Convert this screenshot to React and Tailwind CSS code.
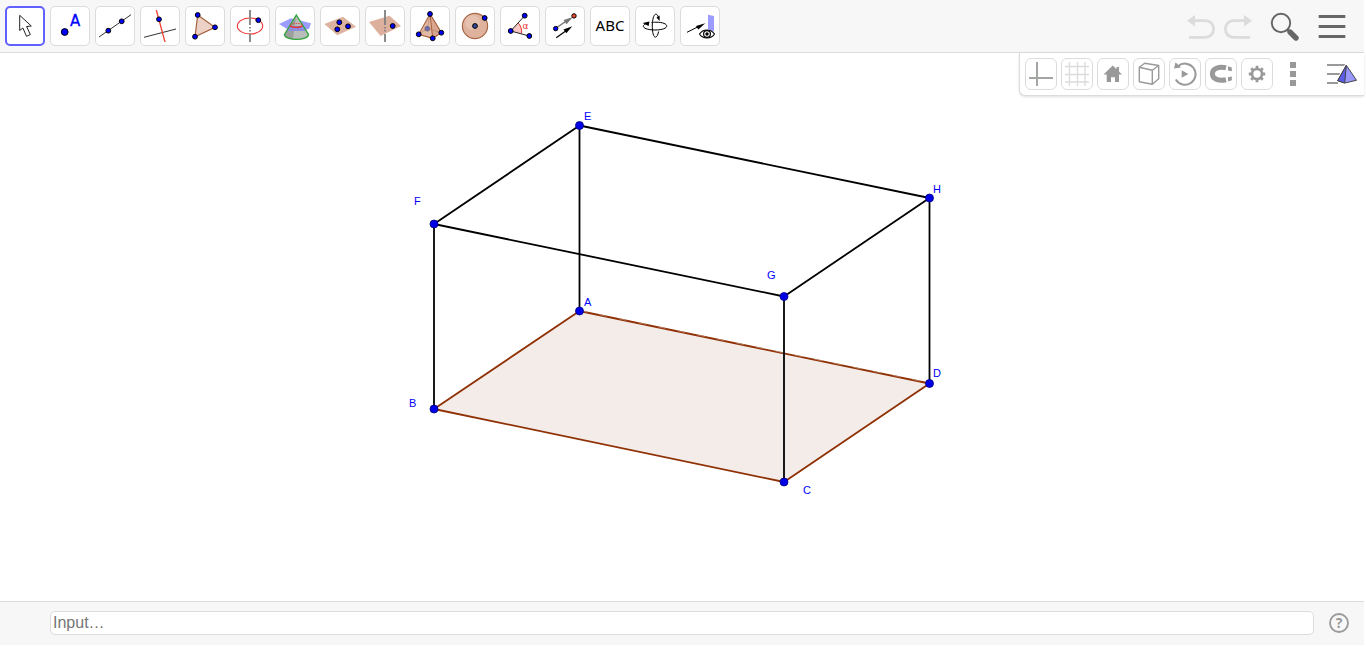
import React from 'react';
import { useState } from 'react';

// small construction point used inside the tool icons
function Dot({ x, y, r = 2.4, fill = '#0000ff' }) {
  return <circle cx={x} cy={y} r={r} fill={fill} stroke="#000" strokeWidth="1" />;
}

const tools = [
  {
    name: 'Move',
    icon: (
      <path d="M10.7 5.3V20.5L13.9 18L17.5 26.3L21.3 24.5L17.6 16.5L22.3 16Z" fill="#fff" stroke="#222" strokeWidth="1" />
    ),
  },
  {
    name: 'Point',
    icon: (
      <>
        <Dot x={10.7} y={22} r={3.4} />
        <text x="16" y="16" fontSize="15" fill="#0000ff" stroke="#0000ff" strokeWidth="0.3" className="font-['DejaVu_Sans',sans-serif]">A</text>
      </>
    ),
  },
  {
    name: 'Line',
    icon: (
      <>
        <path d="M0 27L32 4.7" stroke="#333" strokeWidth="1" />
        <Dot x={9.3} y={20.7} />
        <Dot x={22.7} y={11.3} />
      </>
    ),
  },
  {
    name: 'Perpendicular Line',
    icon: (
      <>
        <path d="M0 27.3L32 19" stroke="#333" strokeWidth="1" />
        <path d="M12.3 0L21 32" stroke="#f04030" strokeWidth="1.3" />
        <Dot x={15} y={9.3} />
      </>
    ),
  },
  {
    name: 'Polygon',
    icon: (
      <>
        <path d="M8.7 5L26 17.3L6 26.7Z" fill="#ecd2c6" stroke="#a5603c" strokeWidth="1.2" />
        <Dot x={8.7} y={5} />
        <Dot x={26} y={17.3} />
        <Dot x={6} y={26.7} />
      </>
    ),
  },
  {
    name: 'Circle with Axis through Point',
    icon: (
      <>
        <ellipse cx="16" cy="16" rx="12.7" ry="8" fill="none" stroke="#f03030" strokeWidth="1.1" />
        <path d="M16 0V15M16 17V18.5M16 20V21.5M16 23.5V32" stroke="#808080" strokeWidth="1.8" />
        <Dot x={24.3} y={10.2} />
      </>
    ),
  },
  {
    name: 'Intersect Two Surfaces',
    icon: (
      <>
        <path d="M0 14L12 8.3L32 13.3L30 19L13 22Z" fill="#9c9cff" />
        <path d="M17.3 5L5.5 24.5C5.5 31 29.5 31 29.5 24.5Z" fill="#b9bdb9" />
        <path d="M17.3 5L5.5 24.5C5.5 28 10 29 14 29Z" fill="#9ca09c" />
        <path d="M11 16L23.5 16L27 21L8 21Z" fill="#8c8ce0" />
        <path d="M17.3 5L5.5 24.5C5.5 31 29.5 31 29.5 24.5Z" fill="none" stroke="#2fa43a" strokeWidth="1.3" />
        <path d="M11 15.5C13 18 21.5 18 23.5 15.5" fill="none" stroke="#e83030" strokeWidth="1.4" />
        <path d="M12 14.5C14 13 21 13 23 14.5" fill="none" stroke="#e83030" strokeWidth="0.8" strokeDasharray="1.5 1" />
      </>
    ),
  },
  {
    name: 'Plane through 3 Points',
    icon: (
      <>
        <path d="M0.3 14L19 6.7L32 16.7L13.3 25.3Z" fill="#dcb3a0" />
        <Dot x={15.3} y={12.3} />
        <Dot x={24} y={16.3} />
        <Dot x={13.3} y={19.3} />
      </>
    ),
  },
  {
    name: 'Perpendicular Plane',
    icon: (
      <>
        <path d="M0 12L20.5 5.7L32 16L11.5 26Z" fill="#dcb09c" />
        <path d="M16 0V15M16 17V18.5M16 20V21.5M16 24V32" stroke="#808080" strokeWidth="1.8" />
        <Dot x={23.7} y={16} />
      </>
    ),
  },
  {
    name: 'Pyramid',
    icon: (
      <>
        <path d="M16 4L4.7 24.3L18.7 28.3L27.3 22.7Z" fill="#e3baa6" stroke="#a5603c" strokeWidth="1.1" />
        <path d="M16 4L18.7 28.3L27.3 22.7Z" fill="#d9a68e" stroke="#a5603c" strokeWidth="1" />
        <path d="M16 4L13.3 18.7L4.7 24.3M13.3 18.7L27.3 22.7" fill="none" stroke="#b98368" strokeWidth="0.7" />
        <circle cx="13.3" cy="18.7" r="2.4" fill="#6b6bb5" stroke="#7a6a80" strokeWidth="1" />
        <Dot x={16} y={4} />
        <Dot x={4.7} y={24.3} />
        <Dot x={18.7} y={28.3} />
        <Dot x={27.3} y={22.7} />
      </>
    ),
  },
  {
    name: 'Sphere: Center & Point',
    icon: (
      <>
        <circle cx="16" cy="16" r="12.6" fill="#dfb29d" stroke="#a86848" strokeWidth="1.2" />
        <circle cx="13.5" cy="12.5" r="7.5" fill="#e6c1b0" />
        <Dot x={16} y={16} fill="#334a9a" />
        <Dot x={25.7} y={8} />
      </>
    ),
  },
  {
    name: 'Angle',
    icon: (
      <>
        <path d="M6.7 21L14 13C16.5 15 18 19 17.6 23.4Z" fill="#f9c8c4" />
        <path d="M14 13C16.5 15 18 19 17.6 23.4" fill="none" stroke="#f03030" strokeWidth="1" />
        <path d="M20.7 5.7L6.7 21L25.3 26" fill="none" stroke="#222" strokeWidth="1" />
        <text x="18.5" y="18.5" fontSize="9" fill="#f03030" className="font-['DejaVu_Sans',sans-serif]">α</text>
        <Dot x={6.7} y={21} />
        <Dot x={20.7} y={5.7} />
        <Dot x={25.3} y={26} />
      </>
    ),
  },
  {
    name: 'Translate by Vector',
    icon: (
      <>
        <path d="M6.7 18.3L18 10.6" stroke="#777" strokeWidth="1.3" />
        <path d="M24 7L14.5 10L17.5 14.2Z" fill="#777" />
        <path d="M7.3 27.7L17 20.8" stroke="#000" strokeWidth="1.2" />
        <path d="M23.3 16.3L14.5 19.5L17.3 23.3Z" fill="#000" />
        <Dot x={6.7} y={18.6} r={2.2} />
        <Dot x={25} y={5.9} r={2.2} fill="#f04a30" />
      </>
    ),
  },
  {
    name: 'Text',
    icon: (
      <text x="16" y="21" fontSize="15" textAnchor="middle" fill="#000" className="font-['Noto_Sans',sans-serif]">ABC</text>
    ),
  },
  {
    name: 'Rotate 3D Graphics View',
    icon: (
      <>
        <path d="M8 13.4C2 15 2.6 19.8 16 20C31.5 20 31.5 12.2 17 12.2C15 12.2 14 12.3 12.5 12.5" fill="none" stroke="#000" strokeWidth="1" />
        <path d="M19.6 8C18 1.5 14 3 13.3 14C13 30 18 30 19.6 21.5" fill="none" stroke="#000" strokeWidth="1" />
        <path d="M3.6 13L10.5 11.6L9.6 16Z" fill="#000" />
        <path d="M17.5 7.6L20.6 5.6V11Z" fill="#000" />
      </>
    ),
  },
  {
    name: 'View in front of',
    icon: (
      <>
        <path d="M24 4.7L30 6V21.5L24 19Z" fill="#9c9cff" />
        <path d="M3 22.3L14 16.8" stroke="#000" strokeWidth="1" />
        <path d="M21.3 13.3L12 16L14.3 19.4Z" fill="#000" />
        <path d="M15.5 24C19 18.6 27 18.6 30.5 24C27 29.4 19 29.4 15.5 24Z" fill="#fff" stroke="#000" strokeWidth="1.1" />
        <circle cx="23" cy="24" r="3.4" fill="#fff" stroke="#000" strokeWidth="1.2" />
        <circle cx="23" cy="24" r="1.7" fill="#000" />
      </>
    ),
  },
];

const viewOptions = [
  {
    name: 'Show or hide the axes',
    icon: <path d="M12 4V28M4 20H28" stroke="#a3a6a3" strokeWidth="2" />,
  },
  {
    name: 'Show or hide the grid',
    icon: <path d="M8.5 4V28M16.5 4V28M24 4V28M4 8.5H28M4 16.5H28M4 24H28" stroke="#dedcda" strokeWidth="1.4" />,
  },
  {
    name: 'Back to default view',
    icon: <path d="M15.7 7.5L6.5 16.5H9.7V24H14V19.3H18V24H22V16.5H25L22 13.6V9H19.5V11.2Z" fill="#999" />,
  },
  {
    name: 'Clipping box',
    icon: (
      <path
        d="M6.3 9.3L19.3 12.3V26.3L6.3 23.7ZM6.3 9.3L11.7 5.3L25.7 7.5V20.7L19.3 26.3M19.3 12.3L25.7 7.5"
        fill="none" stroke="#999" strokeWidth="1.4" strokeLinejoin="round"
      />
    ),
  },
  {
    name: 'Start rotation',
    icon: (
      <>
        <path d="M9 8.2A10.6 10.6 0 1 1 6.8 21.5" fill="none" stroke="#999" strokeWidth="2" />
        <path d="M5 10.5L6.5 4.2L12 9.6Z" fill="#999" />
        <path d="M12.7 12.2L19.3 16L12.7 19.8Z" fill="#999" />
      </>
    ),
  },
  {
    name: 'Point capturing',
    icon: (
      <>
        <path d="M21 9.8C17 8.9 14 9.2 11.5 10.2C6 12.3 6 19.2 11.5 21.4C14 22.4 17 22.7 21 21.8" fill="none" stroke="#999" strokeWidth="5" />
        <path d="M23 8.2L26.8 9.5V13.2L23 12.5ZM23 19.3L26.8 18.6V22.2L23 23.6Z" fill="#999" />
      </>
    ),
  },
  {
    name: 'Settings',
    icon: (
      <>
        <circle cx="16" cy="16" r="5" fill="none" stroke="#999" strokeWidth="2.6" />
        <path
          d="M16 7.8V11M16 21V24.2M7.8 16H11M21 16H24.2M10.2 10.2L12.4 12.4M19.6 19.6L21.8 21.8M10.2 21.8L12.4 19.6M19.6 12.4L21.8 10.2"
          stroke="#999" strokeWidth="2.8"
        />
      </>
    ),
  },
];

const vertices = {
  A: { x: 579.5, y: 258, lx: 584, ly: 253 },
  B: { x: 434, y: 356, lx: 409, ly: 354 },
  C: { x: 784, y: 429, lx: 803, ly: 441 },
  D: { x: 929.5, y: 330.5, lx: 933, ly: 324 },
  E: { x: 579.5, y: 72.5, lx: 584, ly: 67 },
  F: { x: 434, y: 171, lx: 414, ly: 152 },
  G: { x: 784, y: 243.5, lx: 767, ly: 226 },
  H: { x: 929.5, y: 145, lx: 933, ly: 140 },
};

const baseEdges = ['AB', 'BC', 'CD', 'DA'];
const edges = ['EF', 'FG', 'GH', 'HE', 'AE', 'BF', 'CG', 'DH'];

function Edge({ ends, color }) {
  const from = vertices[ends[0]];
  const to = vertices[ends[1]];
  return <line x1={from.x} y1={from.y} x2={to.x} y2={to.y} stroke={color} strokeWidth="1.8" />;
}

function Scene() {
  const base = ['A', 'B', 'C', 'D'].map((n) => `${vertices[n].x},${vertices[n].y}`).join(' ');

  return (
    <svg viewBox="0 0 1364 548" className="block w-full h-full" role="img" aria-label="Cuboid ABCDEFGH">
      <polygon points={base} fill="#f4ece9" />
      {baseEdges.map((ends) => <Edge key={ends} ends={ends} color="#8f3005" />)}
      {/* hidden part of the back edge shows through as dashes */}
      <line x1="579.5" y1="257.5" x2="929.5" y2="330" stroke="#c09078" strokeWidth="0.7" strokeDasharray="8 12" />
      {edges.map((ends) => <Edge key={ends} ends={ends} color="#000" />)}
      {Object.entries(vertices).map(([name, v]) => (
        <g key={name}>
          <circle cx={v.x} cy={v.y} r="4" fill="#0000e6" stroke="#000080" strokeWidth="0.8" />
          <text x={v.lx} y={v.ly} fontSize="11" fill="#0000ff" className="font-['Liberation_Sans',Arial,sans-serif]">{name}</text>
        </g>
      ))}
    </svg>
  );
}

export default function App() {
  const [activeTool, setActiveTool] = useState('Move');
  const [command, setCommand] = useState('');

  return (
    <div className="h-screen flex flex-col bg-white pr-0.5 pb-px overflow-hidden font-['Liberation_Sans',Arial,sans-serif]">
      <header className="flex items-center justify-between shrink-0 bg-[#f7f7f7] border-b border-[#dcdcdc] pl-[5px] pr-4 py-1.5">
        <div className="flex gap-[5px]">
          {tools.map((tool) => (
            <button
              key={tool.name}
              aria-label={tool.name}
              onClick={() => setActiveTool(tool.name)}
              className={`w-10 h-10 shrink-0 flex items-center justify-center bg-white rounded-[5px] ${activeTool === tool.name ? 'border-2 border-[#6161ff]' : 'border border-[#dcdcdc]'}`}
            >
              <svg viewBox="0 0 32 32" className="w-8 h-8 shrink-0">{tool.icon}</svg>
            </button>
          ))}
        </div>

        <div className="flex items-center">
          <button aria-label="Undo" className="mr-[5px]">
            <svg viewBox="0 0 32 32" className="w-8 h-8">
              <path d="M9 10.7H20C31.5 10.7 31.5 27.3 20 27.3H4" fill="none" stroke="#dcdcdc" strokeWidth="2.8" />
              <path d="M2 10.7L10 5V16.4Z" fill="#dcdcdc" />
            </svg>
          </button>
          <button aria-label="Redo" className="mr-3.5">
            <svg viewBox="0 0 32 32" className="w-8 h-8">
              <path d="M23 10.7H12C0.5 10.7 0.5 27.3 12 27.3H28" fill="none" stroke="#dcdcdc" strokeWidth="2.8" />
              <path d="M30 10.7L22 5V16.4Z" fill="#dcdcdc" />
            </svg>
          </button>
          <button aria-label="Search" className="mr-4">
            <svg viewBox="0 0 32 32" className="w-8 h-8">
              <circle cx="13" cy="13" r="9.2" fill="none" stroke="#666" strokeWidth="1.9" />
              <path d="M19.5 19.5L23 23" stroke="#666" strokeWidth="2.4" />
              <path d="M22 22L28 28" stroke="#666" strokeWidth="5.4" strokeLinecap="round" />
            </svg>
          </button>
          <button aria-label="Menu">
            <svg viewBox="0 0 32 32" className="w-8 h-8">
              <path d="M2.7 6.5H29.3M2.7 16.5H29.3M2.7 26.5H29.3" stroke="#666" strokeWidth="3" />
            </svg>
          </button>
        </div>
      </header>

      <main className="relative flex-1 min-h-0">
        <Scene />
        <div className="absolute top-0 right-0 flex gap-1 bg-white border-l border-b border-[#dcdcdc] rounded-bl-md shadow-sm pl-[5px] pr-[7px] py-[5px]">
          {viewOptions.map((option) => (
            <button
              key={option.name}
              aria-label={option.name}
              className="w-8 h-8 flex items-center justify-center bg-white border border-[#dcdcdc] rounded-md"
            >
              <svg viewBox="0 0 32 32" className="w-8 h-8 shrink-0">{option.icon}</svg>
            </button>
          ))}
          <button aria-label="More" className="w-8 h-8">
            <svg viewBox="0 0 32 32" className="w-8 h-8">
              <path d="M13 4H19V10H13ZM13 13H19V19H13ZM13 22H19V28H13Z" fill="#999" />
            </svg>
          </button>
          <button aria-label="Views" className="w-8 h-8 ml-3">
            <svg viewBox="0 0 32 32" className="w-8 h-8">
              <path d="M2 7H20M2 16H16M2 25H13" stroke="#999" strokeWidth="2" />
              <path d="M21.3 7.3L12.7 22.7L19.7 25L31.5 22.3Z" fill="#9999ff" stroke="#fff" strokeWidth="3" />
              <path d="M21.3 7.3L12.7 22.7L19.7 25L31.5 22.3Z" fill="#9999ff" stroke="#444" strokeWidth="1" />
              <path d="M21.3 7.3L12.7 22.7L19.7 25Z" fill="#5c5ce6" stroke="#444" strokeWidth="1" />
            </svg>
          </button>
        </div>
      </main>

      <footer className="flex items-center shrink-0 bg-[#f7f7f7] border-t border-[#dcdcdc] pl-[50px] pr-[15px] pb-px h-11">
        <input
          type="text"
          aria-label="Input"
          placeholder="Input…"
          value={command}
          onChange={(e) => setCommand(e.target.value)}
          className="flex-1 min-w-0 h-6 px-0.5 bg-white border border-[#dcdcdc] rounded-[5px] text-base leading-5 placeholder:text-[#757575] outline-none"
        />
        <button aria-label="Help" className="ml-[15px]">
          <svg viewBox="0 0 20 20" className="w-5 h-5">
            <circle cx="10" cy="10" r="9" fill="none" stroke="#999" strokeWidth="1.8" />
            <text x="10" y="15" fontSize="14" fontWeight="700" textAnchor="middle" fill="#999" className="font-['Open_Sans',sans-serif]">?</text>
          </svg>
        </button>
      </footer>
    </div>
  );
}
